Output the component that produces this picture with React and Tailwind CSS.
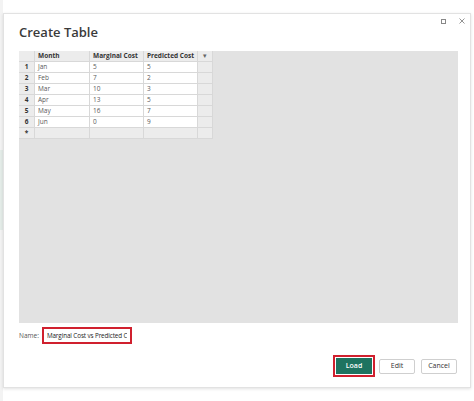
import React from "react";

const rows = [
  ["1", "Jan", "5", "5"],
  ["2", "Feb", "7", "2"],
  ["3", "Mar", "10", "3"],
  ["4", "Apr", "13", "5"],
  ["5", "May", "16", "7"],
  ["6", "Jun", "0", "9"],
];

const font = { fontFamily: '"Open Sans", "Noto Sans", sans-serif' };

const Cell = ({ children, className = "" }) => (
  <div className={`h-[10px] flex items-center px-[3px] text-[6.5px] leading-none ${className}`}>
    {children}
  </div>
);

const App = () => {
  return (
    <div className="w-[474px] h-[401px] bg-white flex" style={font}>
      {/* page behind the dialog */}
      <div className="w-[3px] h-full bg-[#f3f3f3] flex flex-col">
        <div className="mt-[150px] h-[80px] bg-[#e4ece8]" />
      </div>

      {/* dialog */}
      <div className="mt-[13px] w-[468px] h-[375px] bg-white border border-[#e2e2e2] shadow-[0_1px_3px_rgba(0,0,0,0.12)] flex flex-col relative">
        <div className="absolute top-[4px] right-[5px] flex items-center gap-[13px]">
          <div className="w-[5px] h-[5px] border border-[#888]" />
          <svg width="6" height="6" viewBox="0 0 6 6">
            <path d="M0.5 0.5 L5.5 5.5 M5.5 0.5 L0.5 5.5" stroke="#888" strokeWidth="0.9" />
          </svg>
        </div>

        <h1 className="ml-[15px] mt-[10px] text-[13px] leading-[16px] font-semibold text-[#3a3a3a]">
          Create Table
        </h1>

        {/* table area */}
        <div className="ml-[15px] mt-[11px] w-[439px] h-[272px] bg-[#e2e2e2]">
          <div className="grid grid-cols-[15px_54px_53px_53px_14px] gap-px bg-[#d8d8d8] w-[194px] border-r border-b border-[#d8d8d8]">
            <Cell className="bg-[#ececec]" />
            <Cell className="bg-[#ececec] font-bold text-[#333]">Month</Cell>
            <Cell className="bg-[#ececec] font-bold text-[#333]">Marginal Cost</Cell>
            <Cell className="bg-[#ececec] font-bold text-[#333]">Predicted Cost</Cell>
            <Cell className="bg-[#ececec] justify-center text-[#666]">▾</Cell>
            {rows.map((r) => (
              <React.Fragment key={r[0]}>
                <Cell className="bg-[#ececec] justify-center font-bold text-[#333]">{r[0]}</Cell>
                <Cell className="bg-white text-[#5a5a5a]">{r[1]}</Cell>
                <Cell className="bg-white text-[#5a5a5a]">{r[2]}</Cell>
                <Cell className="bg-white text-[#5a5a5a]">{r[3]}</Cell>
                <Cell className="bg-[#ececec]" />
              </React.Fragment>
            ))}
            <Cell className="bg-[#ececec] justify-center font-bold text-[#333]">*</Cell>
            <Cell className="bg-[#ececec]" />
            <Cell className="bg-[#ececec]" />
            <Cell className="bg-[#ececec]" />
            <Cell className="bg-[#ececec]" />
          </div>
        </div>

        {/* name row */}
        <div className="ml-[15px] mt-[4px] flex items-center gap-[3px]">
          <span className="text-[6.5px] text-[#555]">Name:</span>
          <input
            readOnly
            value="Marginal Cost vs Predicted Cost"
            className="w-[90px] h-[17px] border-2 border-[#d0202e] bg-white px-[3px] text-[6.3px] tracking-[-0.1px] text-[#222] outline-none"
          />
        </div>

        {/* buttons */}
        <div className="mt-[11px] mr-[13px] flex justify-end items-center">
          <div className="border-2 border-[#d0202e] p-px mr-[4px]">
            <button className="w-[36px] h-[16px] bg-[#1e7360] text-white text-[7px] font-semibold flex items-center justify-center">
              Load
            </button>
          </div>
          <button className="w-[36px] h-[15px] mr-[6px] bg-white border border-[#cfcfcf] rounded-[2px] text-[7px] text-[#333] flex items-center justify-center">
            Edit
          </button>
          <button className="w-[36px] h-[15px] bg-white border border-[#cfcfcf] rounded-[2px] text-[7px] text-[#333] flex items-center justify-center">
            Cancel
          </button>
        </div>
      </div>
    </div>
  );
};

export default App;
